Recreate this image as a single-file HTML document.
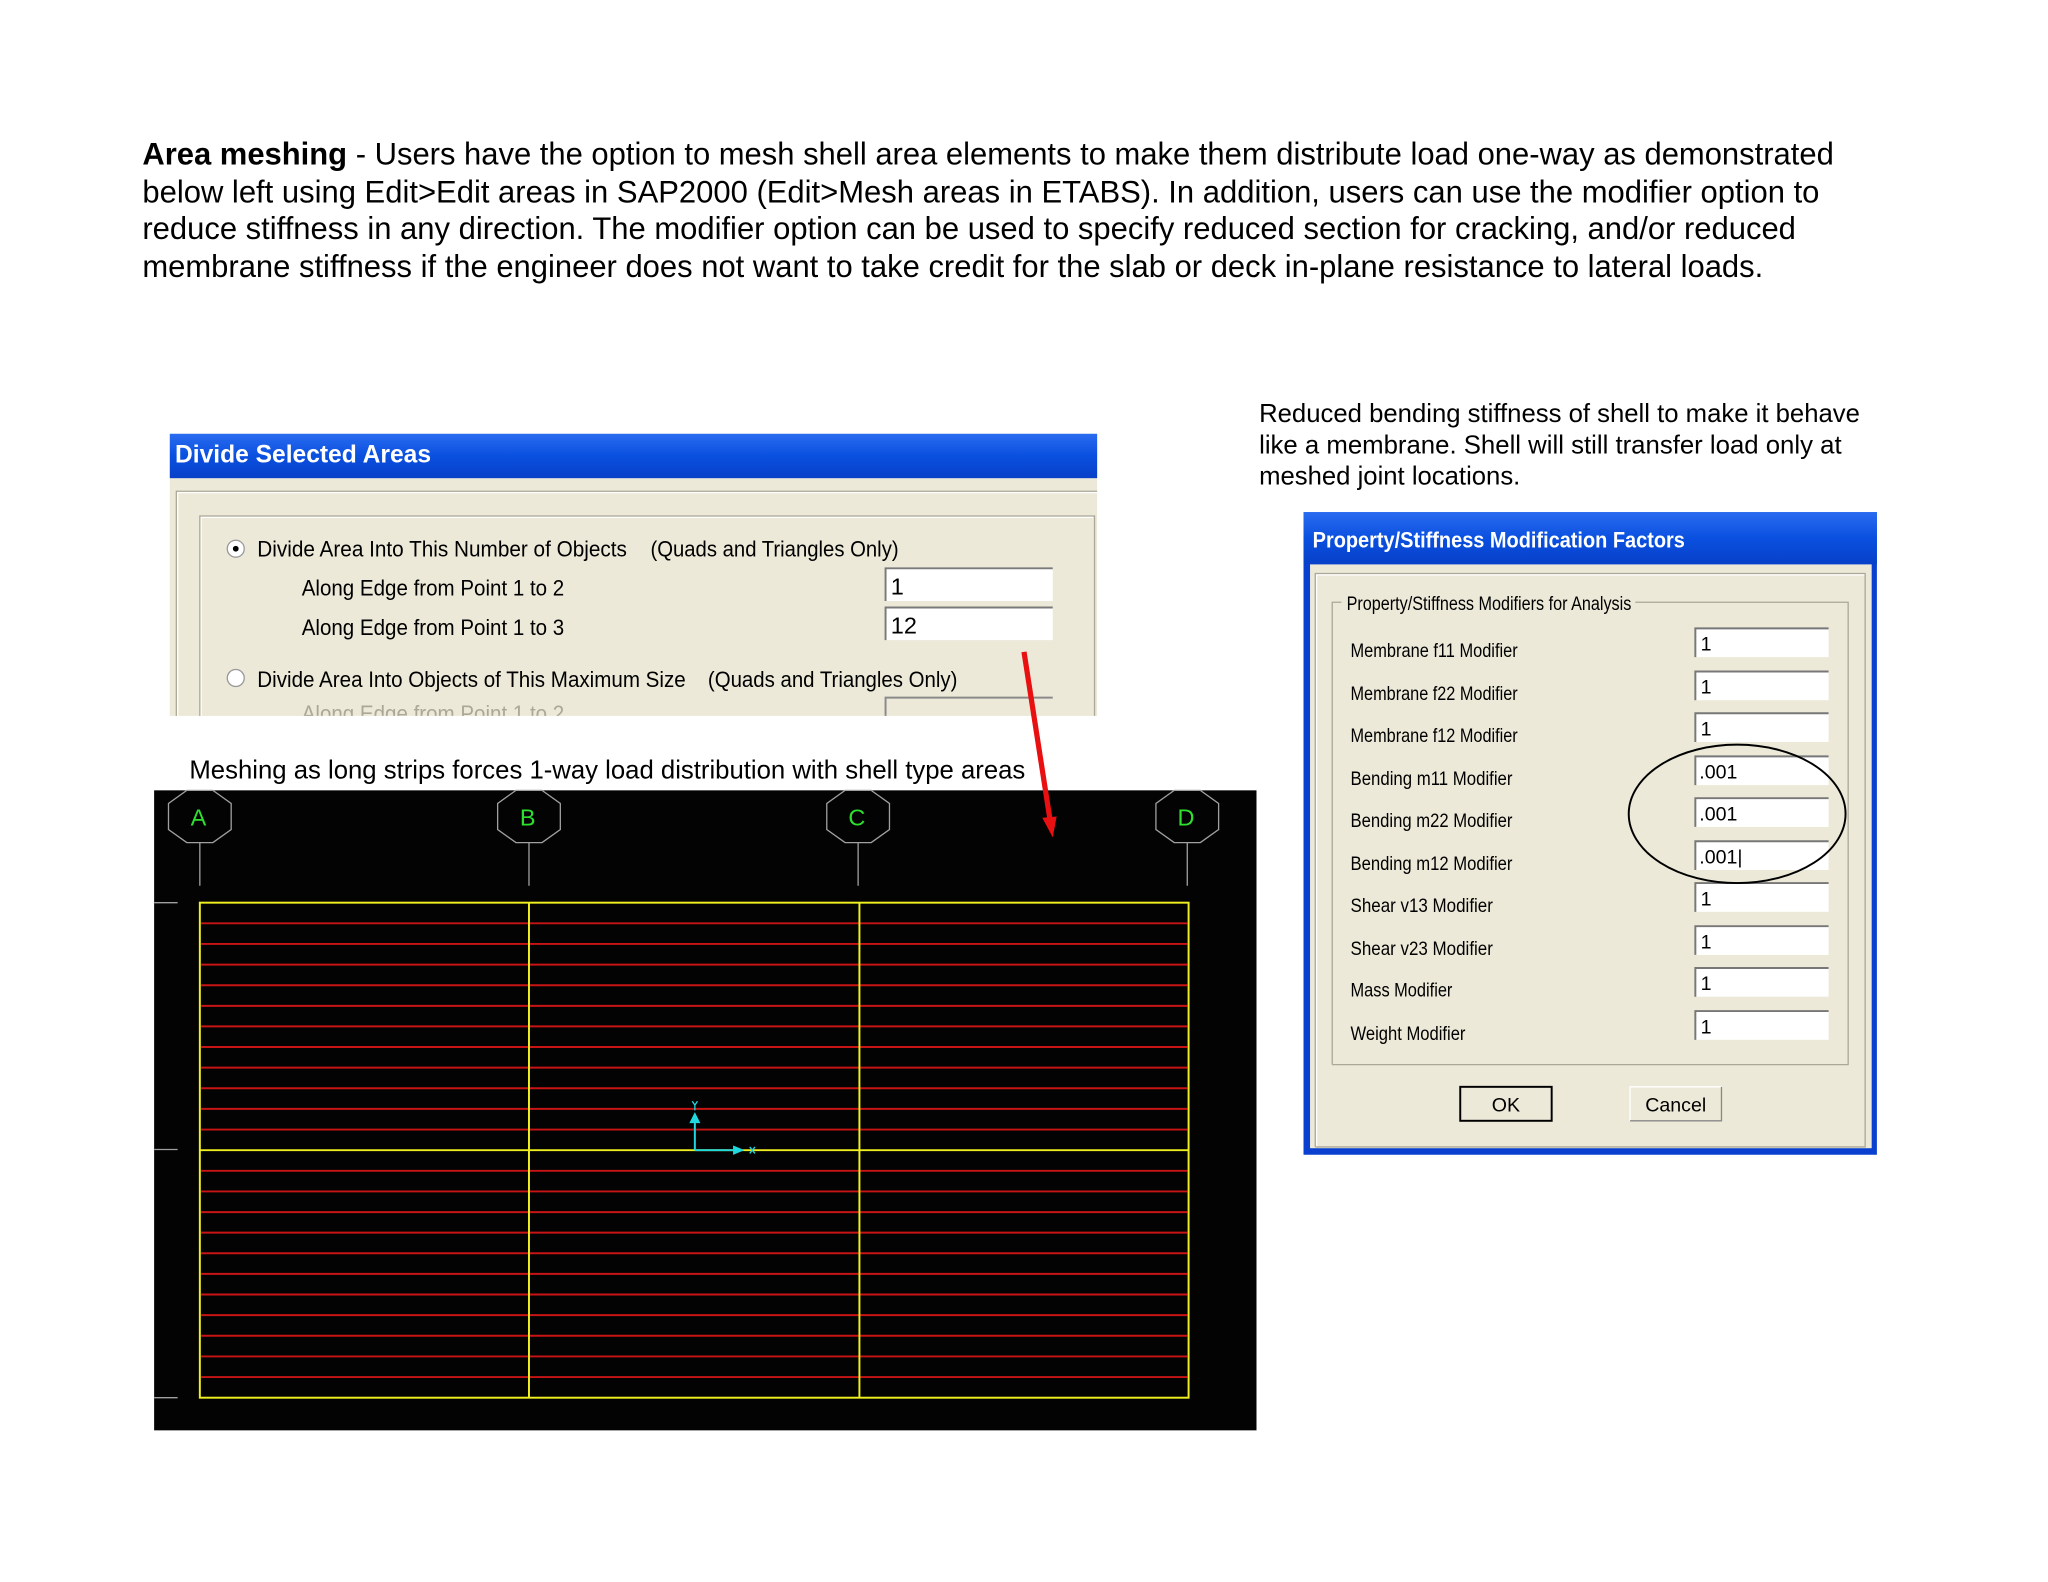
<!DOCTYPE html>
<html><head><meta charset="utf-8"><style>
html,body{margin:0;padding:0;background:#fff;width:2048px;height:1582px;overflow:hidden}
svg{display:block}
.n{font-family:"Liberation Sans Narrow","Liberation Sans",sans-serif}
.s{font-family:"Liberation Sans",sans-serif}
</style></head><body>
<svg width="2048" height="1582" viewBox="0 0 1568 1211" xmlns="http://www.w3.org/2000/svg">
<defs>
<linearGradient id="tb" x1="0" y1="0" x2="0" y2="1">
<stop offset="0" stop-color="#2a6cf0"/><stop offset="0.5" stop-color="#0a50e0"/><stop offset="1" stop-color="#0840c8"/>
</linearGradient>
</defs>
<rect width="1568" height="1211" fill="#fff"/>
<g class="s" font-size="24" fill="#000">
<text x="109" y="126" textLength="1295" lengthAdjust="spacingAndGlyphs"><tspan font-weight="bold">Area meshing</tspan> - Users have the option to mesh shell area elements to make them distribute load one-way as demonstrated</text>
<text x="109" y="155" textLength="1284" lengthAdjust="spacingAndGlyphs">below left using Edit&gt;Edit areas in SAP2000 (Edit&gt;Mesh areas in ETABS). In addition, users can use the modifier option to</text>
<text x="109" y="183" textLength="1266" lengthAdjust="spacingAndGlyphs">reduce stiffness in any direction. The modifier option can be used to specify reduced section for cracking, and/or reduced</text>
<text x="109" y="212" textLength="1241" lengthAdjust="spacingAndGlyphs">membrane stiffness if the engineer does not want to take credit for the slab or deck in-plane resistance to lateral loads.</text>
</g>
<g class="s" font-size="20" fill="#000">
<text x="964" y="323" textLength="460" lengthAdjust="spacingAndGlyphs">Reduced bending stiffness of shell to make it behave</text>
<text x="964" y="347" textLength="446" lengthAdjust="spacingAndGlyphs">like a membrane. Shell will still transfer load only at</text>
<text x="964" y="371" textLength="200" lengthAdjust="spacingAndGlyphs">meshed joint locations.</text>
<text x="145" y="596" textLength="640" lengthAdjust="spacingAndGlyphs">Meshing as long strips forces 1-way load distribution with shell type areas</text>
</g>

<rect x="130" y="332" width="710" height="216" fill="#ece9d8"/>
<rect x="130" y="332" width="710" height="34" fill="url(#tb)"/>
<text x="134" y="354" class="n" font-size="19" font-weight="bold" fill="#fff" textLength="196" lengthAdjust="spacingAndGlyphs">Divide Selected Areas</text>
<path d="M136 548V377H840" fill="none" stroke="#fff" stroke-width="1"/>
<path d="M135 548V376H840" fill="none" stroke="#aca899" stroke-width="1"/>
<path d="M153 548V395H838V548" fill="none" stroke="#aca899" stroke-width="1"/>
<path d="M154 548V396H837" fill="none" stroke="#fff" stroke-width="1"/>
<circle cx="180.5" cy="420" r="6.5" fill="#fff" stroke="#999" stroke-width="1"/>
<circle cx="180.5" cy="420" r="2.2" fill="#000"/>
<circle cx="180.5" cy="519" r="6.5" fill="#fff" stroke="#999" stroke-width="1"/>
<g class="n" font-size="17" fill="#000">
<text x="197" y="426" textLength="283" lengthAdjust="spacingAndGlyphs">Divide Area Into This Number of Objects</text>
<text x="498" y="426" textLength="190" lengthAdjust="spacingAndGlyphs">(Quads and Triangles Only)</text>
<text x="231" y="456" textLength="201" lengthAdjust="spacingAndGlyphs">Along Edge from Point 1 to 2</text>
<text x="231" y="486" textLength="201" lengthAdjust="spacingAndGlyphs">Along Edge from Point 1 to 3</text>
<text x="197" y="526" textLength="328" lengthAdjust="spacingAndGlyphs">Divide Area Into Objects of This Maximum Size</text>
<text x="542" y="526" textLength="191" lengthAdjust="spacingAndGlyphs">(Quads and Triangles Only)</text>
</g>
<g>
<rect x="678" y="435" width="128" height="25" fill="#fff"/>
<path d="M678 460V435H806" fill="none" stroke="#7a7a7a" stroke-width="1.5"/>
<rect x="678" y="465" width="128" height="25" fill="#fff"/>
<path d="M678 490V465H806" fill="none" stroke="#7a7a7a" stroke-width="1.5"/>
<path d="M678 548V534H806" fill="none" stroke="#8a8a8a" stroke-width="1.5"/>
<text x="682" y="455" class="n" font-size="18">1</text>
<text x="682" y="485" class="n" font-size="18">12</text>
</g>
<clipPath id="cp"><rect x="130" y="536" width="700" height="12"/></clipPath>
<text x="231" y="552" class="n" font-size="17" fill="#aca899" clip-path="url(#cp)" textLength="201" lengthAdjust="spacingAndGlyphs">Along Edge from Point 1 to 2</text>

<rect x="118" y="605" width="844" height="490" fill="#030303"/>
<g fill="none" stroke="#a0a0a0" stroke-width="1">
<path d="M143 605h20l14 10v20l-14 10h-20l-14-10v-20z"/>
<path d="M395 605h20l14 10v20l-14 10h-20l-14-10v-20z"/>
<path d="M647 605h20l14 10v20l-14 10h-20l-14-10v-20z"/>
<path d="M899 605h20l14 10v20l-14 10h-20l-14-10v-20z"/>
<path d="M153 645V678M405 645V678M657 645V678M909 645V678"/>
<path d="M118 691H136M118 880H136M118 1070H136"/>
</g>
<g class="n" font-size="18" fill="#2ee02e" text-anchor="middle">
<text x="152" y="632">A</text><text x="404" y="632">B</text><text x="656" y="632">C</text><text x="908" y="632">D</text>
</g>
<g stroke="#c81414" stroke-width="1.5">
<path d="M154 706.8H909M154 722.6H909M154 738.4H909M154 754.2H909M154 770H909M154 785.7H909M154 801.5H909M154 817.3H909M154 833.1H909M154 848.9H909M154 864.7H909M154 896.3H909M154 912.1H909M154 927.9H909M154 943.6H909M154 959.4H909M154 975.2H909M154 991H909M154 1006.8H909M154 1022.6H909M154 1038.4H909M154 1054.2H909"/>
</g>
<g stroke="#f0f020" stroke-width="1.5" fill="none">
<rect x="153" y="691" width="757" height="379"/>
<path d="M405 691V1070M658 691V1070M153 880.5H910"/>
</g>
<g stroke="#20d8e0" stroke-width="1.5" fill="#20d8e0">
<path d="M532 880.5V855M532 880.5H566" fill="none"/>
<path d="M529 859l3-6 3 6z"/>
<path d="M562 878l6 2.5-6 2.5z"/>
<path d="M530 843l2 3 2-3M532 846v4" fill="none" stroke-width="1"/>
<path d="M574 878l4 5M578 878l-4 5" fill="none" stroke-width="1"/>
</g>
<path d="M784 499L804 628" stroke="#e81010" stroke-width="4"/>
<path d="M798 626l8 15 3-16z" fill="#e81010"/>

<rect x="998" y="392" width="439" height="492" fill="#0a40d0"/>
<rect x="998" y="392" width="439" height="40" fill="url(#tb)"/>
<rect x="1003" y="432" width="430" height="447" fill="#ece9d8"/>
<text x="1005" y="419" class="s" font-size="17" font-weight="bold" fill="#fff" textLength="285" lengthAdjust="spacingAndGlyphs">Property/Stiffness Modification Factors</text>
<path d="M1008 878V440H1428" fill="none" stroke="#fff"/>
<path d="M1007 878V439H1428V878H1007" fill="none" stroke="#aca899"/>
<path d="M1020 815V461H1027M1252 461H1415V815H1020" fill="none" stroke="#aca899"/>
<text x="1031" y="467" class="n" font-size="14.5" fill="#000" textLength="218" lengthAdjust="spacingAndGlyphs">Property/Stiffness Modifiers for Analysis</text>
<g class="n" font-size="15" fill="#000">
<text x="1034" y="503" textLength="128" lengthAdjust="spacingAndGlyphs">Membrane f11 Modifier</text>
<text x="1034" y="536" textLength="128" lengthAdjust="spacingAndGlyphs">Membrane f22 Modifier</text>
<text x="1034" y="568" textLength="128" lengthAdjust="spacingAndGlyphs">Membrane f12 Modifier</text>
<text x="1034" y="601" textLength="124" lengthAdjust="spacingAndGlyphs">Bending  m11 Modifier</text>
<text x="1034" y="633" textLength="124" lengthAdjust="spacingAndGlyphs">Bending  m22 Modifier</text>
<text x="1034" y="666" textLength="124" lengthAdjust="spacingAndGlyphs">Bending  m12 Modifier</text>
<text x="1034" y="698" textLength="109" lengthAdjust="spacingAndGlyphs">Shear  v13 Modifier</text>
<text x="1034" y="731" textLength="109" lengthAdjust="spacingAndGlyphs">Shear  v23 Modifier</text>
<text x="1034" y="763" textLength="78" lengthAdjust="spacingAndGlyphs">Mass Modifier</text>
<text x="1034" y="796" textLength="88" lengthAdjust="spacingAndGlyphs">Weight Modifier</text>
</g>
<g>
<rect x="1298" y="481" width="102" height="22" fill="#fff"/><path d="M1298 503V481H1400" fill="none" stroke="#777" stroke-width="1.5"/>
<rect x="1298" y="514" width="102" height="22" fill="#fff"/><path d="M1298 536V514H1400" fill="none" stroke="#777" stroke-width="1.5"/>
<rect x="1298" y="546" width="102" height="22" fill="#fff"/><path d="M1298 568V546H1400" fill="none" stroke="#777" stroke-width="1.5"/>
<rect x="1298" y="579" width="102" height="22" fill="#fff"/><path d="M1298 601V579H1400" fill="none" stroke="#777" stroke-width="1.5"/>
<rect x="1298" y="611" width="102" height="22" fill="#fff"/><path d="M1298 633V611H1400" fill="none" stroke="#777" stroke-width="1.5"/>
<rect x="1298" y="644" width="102" height="22" fill="#fff"/><path d="M1298 666V644H1400" fill="none" stroke="#777" stroke-width="1.5"/>
<rect x="1298" y="676" width="102" height="22" fill="#fff"/><path d="M1298 698V676H1400" fill="none" stroke="#777" stroke-width="1.5"/>
<rect x="1298" y="709" width="102" height="22" fill="#fff"/><path d="M1298 731V709H1400" fill="none" stroke="#777" stroke-width="1.5"/>
<rect x="1298" y="741" width="102" height="22" fill="#fff"/><path d="M1298 763V741H1400" fill="none" stroke="#777" stroke-width="1.5"/>
<rect x="1298" y="774" width="102" height="22" fill="#fff"/><path d="M1298 796V774H1400" fill="none" stroke="#777" stroke-width="1.5"/>
</g>
<g class="n" font-size="15" fill="#000">
<text x="1302" y="498">1</text><text x="1302" y="531">1</text><text x="1302" y="563">1</text>
<text x="1301" y="596">.001</text><text x="1301" y="628">.001</text><text x="1301" y="661">.001|</text>
<text x="1302" y="693">1</text><text x="1302" y="726">1</text><text x="1302" y="758">1</text><text x="1302" y="791">1</text>
</g>
<ellipse cx="1330" cy="623" rx="83" ry="53" fill="none" stroke="#000" stroke-width="1.5"/>
<rect x="1118" y="832" width="70" height="26" fill="#ece9d8" stroke="#000" stroke-width="1.5"/>
<path d="M1248 858V832H1318" fill="none" stroke="#fff"/><path d="M1248 858H1318V832" fill="none" stroke="#888"/>
<text x="1153" y="851" class="n" font-size="15" text-anchor="middle">OK</text>
<text x="1283" y="851" class="n" font-size="15" text-anchor="middle">Cancel</text>
</svg>
</body></html>
